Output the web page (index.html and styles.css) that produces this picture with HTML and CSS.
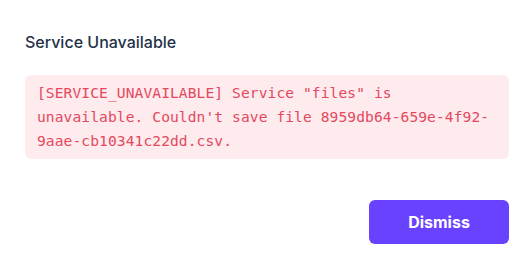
FILE: index.html
```html
<!DOCTYPE html>
<html>
<head>
<meta charset="utf-8">
<link rel="stylesheet" href="styles.css">
</head>
<body>
<div class="dialog">
  <h2 class="title">Service Unavailable</h2>
  <div class="error">[SERVICE_UNAVAILABLE] Service "files" is unavailable. Couldn't save file 8959db64-659e-4f92-9aae-cb10341c22dd.csv.</div>
  <div class="actions">
    <button class="btn">Dismiss</button>
  </div>
</div>
</body>
</html>
```
FILE: styles.css
```css
html, body {
  margin: 0;
  padding: 0;
  background: #ffffff;
}
.dialog {
  width: 484px;
  padding: 30px 23px 0 25px;
  font-family: Inter, "Noto Sans", sans-serif;
}
.title {
  margin: 0;
  font-size: 16px;
  line-height: 24px;
  font-weight: 500;
  color: #243249;
}
.error {
  margin-top: 21px;
  padding: 6px 12px;
  background: #fdebee;
  border-radius: 6px;
  color: #e5485d;
  font-family: "DejaVu Sans Mono", monospace;
  font-size: 14.6px;
  letter-spacing: 0.08px;
  line-height: 24px;
}
.actions {
  display: flex;
  justify-content: flex-end;
  margin-top: 41px;
}
.btn {
  width: 140px;
  height: 44px;
  border: none;
  border-radius: 6px;
  background: #6842ff;
  color: #ffffff;
  font-family: Inter, "Noto Sans", sans-serif;
  font-size: 16px;
  font-weight: 700;
}
```
